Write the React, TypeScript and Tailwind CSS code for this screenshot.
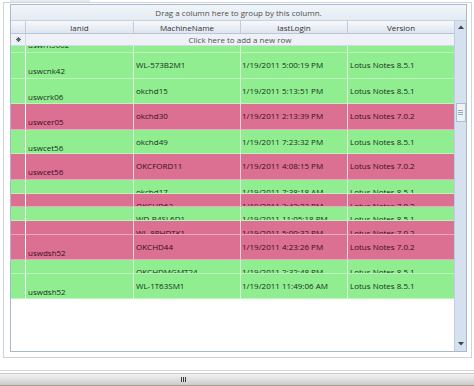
import React from 'react';

type Row = {
  h: string;
  pink: boolean;
  id: string;
  machine: string;
  login: string;
  version: string;
  idClass?: string;
};

const rows: Row[] = [
  { h: 'h-[7px]', pink: false, id: 'uswrn5002', machine: '', login: '', version: '', idClass: '-mt-[7px]' },
  { h: 'h-[26px]', pink: false, id: 'uswcnk42', machine: 'WL-573B2M1', login: '1/19/2011 5:00:19 PM', version: 'Lotus Notes 8.5.1' },
  { h: 'h-[25px]', pink: false, id: 'uswcrk06', machine: 'okchd15', login: '1/19/2011 5:13:51 PM', version: 'Lotus Notes 8.5.1' },
  { h: 'h-[26px]', pink: true, id: 'uswcer05', machine: 'okchd30', login: '1/19/2011 2:13:39 PM', version: 'Lotus Notes 7.0.2' },
  { h: 'h-[24px]', pink: false, id: 'uswcet56', machine: 'okchd49', login: '1/19/2011 7:23:32 PM', version: 'Lotus Notes 8.5.1' },
  { h: 'h-[26px]', pink: true, id: 'uswcet56', machine: 'OKCFORD11', login: '1/19/2011 4:08:15 PM', version: 'Lotus Notes 7.0.2' },
  { h: 'h-[14px]', pink: false, id: '', machine: 'okchd17', login: '1/19/2011 7:38:18 AM', version: 'Lotus Notes 8.5.1' },
  { h: 'h-[13px]', pink: true, id: '', machine: 'OKCHD63', login: '1/19/2011 3:42:23 PM', version: 'Lotus Notes 7.0.2' },
  { h: 'h-[14px]', pink: false, id: '', machine: 'WD-B4SL6D1', login: '1/19/2011 11:05:18 PM', version: 'Lotus Notes 8.5.1' },
  { h: 'h-[14px]', pink: true, id: '', machine: 'WL-8PHDTK1', login: '1/19/2011 5:00:32 PM', version: 'Lotus Notes 7.0.2' },
  { h: 'h-[25px]', pink: true, id: 'uswdsh52', machine: 'OKCHD44', login: '1/19/2011 4:23:26 PM', version: 'Lotus Notes 7.0.2' },
  { h: 'h-[14px]', pink: false, id: '', machine: 'OKCHDMGMT24', login: '1/19/2011 2:32:48 PM', version: 'Lotus Notes 8.5.1' },
  { h: 'h-[25px]', pink: false, id: 'uswdsh52', machine: 'WL-1T63SM1', login: '1/19/2011 11:49:06 AM', version: 'Lotus Notes 8.5.1' },
];

function DataRow({ row }: { row: Row }) {
  const bg = row.pink ? 'bg-[#db7093] text-[#3a0c1c]' : 'bg-[#90ee90] text-[#15301a]';
  return (
    <div className={`flex ${row.h} ${bg} border-b border-white/40 overflow-hidden`}>
      <div className="w-[15px] border-r border-white shrink-0" />
      <div className="w-[108px] border-r border-white/70 shrink-0 pl-[2px] overflow-hidden">
        <div className={row.idClass ?? 'pt-[12px]'}>{row.id}</div>
      </div>
      <div className="w-[107px] border-r border-white/70 shrink-0 pl-[2px] pt-[6px] overflow-hidden">{row.machine}</div>
      <div className="w-[107px] border-r border-white/70 shrink-0 pl-[1px] pt-[6px] overflow-hidden whitespace-nowrap">{row.login}</div>
      <div className="w-[106px] shrink-0 pl-[2px] pt-[6px] overflow-hidden whitespace-nowrap">{row.version}</div>
    </div>
  );
}

export default function App() {
  return (
    <div className="w-[474px] h-[386px] bg-white flex flex-col overflow-hidden font-['Open_Sans',sans-serif] text-[8px] leading-[11px]">
      {/* tab strip */}
      <div className="h-[2px] flex">
        <div className="ml-[10px] w-[80px] bg-[#e3e9f0]" />
      </div>

      {/* outer frame */}
      <div className="ml-[3px] w-[469px] border border-[#cdd4de] pt-[1px] pl-[6px] pr-[4px] pb-[5px]">
        <div className="w-[457px] h-[348px] border border-[#a9b8ca] flex flex-col bg-white">
          {/* group panel */}
          <div className="h-[16px] shrink-0 bg-gradient-to-b from-[#f1f5f9] to-[#e4ebf3] border-b border-[#c6d1de] flex items-center justify-center text-[#4f4f4f]">
            Drag a column here to group by this column.
          </div>

          <div className="flex flex-1 min-h-0">
            {/* rows */}
            <div className="w-[443px] flex flex-col">
              {/* header */}
              <div className="flex h-[13px] shrink-0 bg-gradient-to-b from-[#f6f8fb] to-[#dfe6ef] border-b border-[#b8c5d4] text-[#333]">
                <div className="w-[15px] border-r border-[#c3cdda] shrink-0" />
                <div className="w-[108px] border-r border-[#c3cdda] shrink-0 flex items-center justify-center">lanid</div>
                <div className="w-[107px] border-r border-[#c3cdda] shrink-0 flex items-center justify-center">MachineName</div>
                <div className="w-[107px] border-r border-[#c3cdda] shrink-0 flex items-center justify-center">lastLogin</div>
                <div className="w-[106px] shrink-0 flex items-center justify-center">Version</div>
              </div>

              {/* new row */}
              <div className="flex h-[12px] shrink-0 bg-[#eef2f8] border-b border-[#d2dae5] text-[#505050]">
                <div className="w-[15px] border-r border-[#d2dae5] shrink-0 flex items-center justify-center">
                  <svg width="5" height="5" viewBox="0 0 5 5">
                    <path d="M2.5 0v5M0 2.5h5M0.7 0.7l3.6 3.6M4.3 0.7l-3.6 3.6" stroke="#5a6572" strokeWidth="1" />
                  </svg>
                </div>
                <div className="flex-1 flex items-center justify-center">Click here to add a new row</div>
              </div>

              {rows.map((r, i) => (
                <DataRow key={i} row={r} />
              ))}

              <div className="flex-1 bg-white" />
            </div>

            {/* scrollbar */}
            <div className="w-[12px] shrink-0 bg-[#d5e1ef] border-l border-[#c2cfde] flex flex-col items-center">
              <svg width="6" height="4" viewBox="0 0 6 4" className="mt-[4px]">
                <path d="M0 4L3 0.5L6 4Z" fill="#3d4652" />
              </svg>
              <div className="mt-[74px] w-[10px] h-[19px] bg-[#edf2f8] border border-[#aebdcf] flex flex-col items-center justify-center gap-[1px]">
                <div className="w-[5px] h-px bg-[#9aaabd]" />
                <div className="w-[5px] h-px bg-[#9aaabd]" />
                <div className="w-[5px] h-px bg-[#9aaabd]" />
              </div>
              <div className="flex-1" />
              <svg width="6" height="4" viewBox="0 0 6 4" className="mb-[5px]">
                <path d="M0 0L3 3.5L6 0Z" fill="#3d4652" />
              </svg>
            </div>
          </div>
        </div>
      </div>

      {/* splitter */}
      <div className="mt-[12px] h-px bg-[#d5d9df]" />
      <div className="mt-[2px] h-[13px] bg-gradient-to-b from-[#f2f2f2] to-[#cccccc] border-t border-[#c9c9c9] border-b border-b-[#a99c8c] flex items-center pl-[181px]">
        <div className="flex gap-[1px]">
          <div className="w-px h-[5px] bg-[#3c3c3c]" />
          <div className="w-px h-[5px] bg-[#3c3c3c]" />
          <div className="w-px h-[5px] bg-[#3c3c3c]" />
        </div>
      </div>
    </div>
  );
}
